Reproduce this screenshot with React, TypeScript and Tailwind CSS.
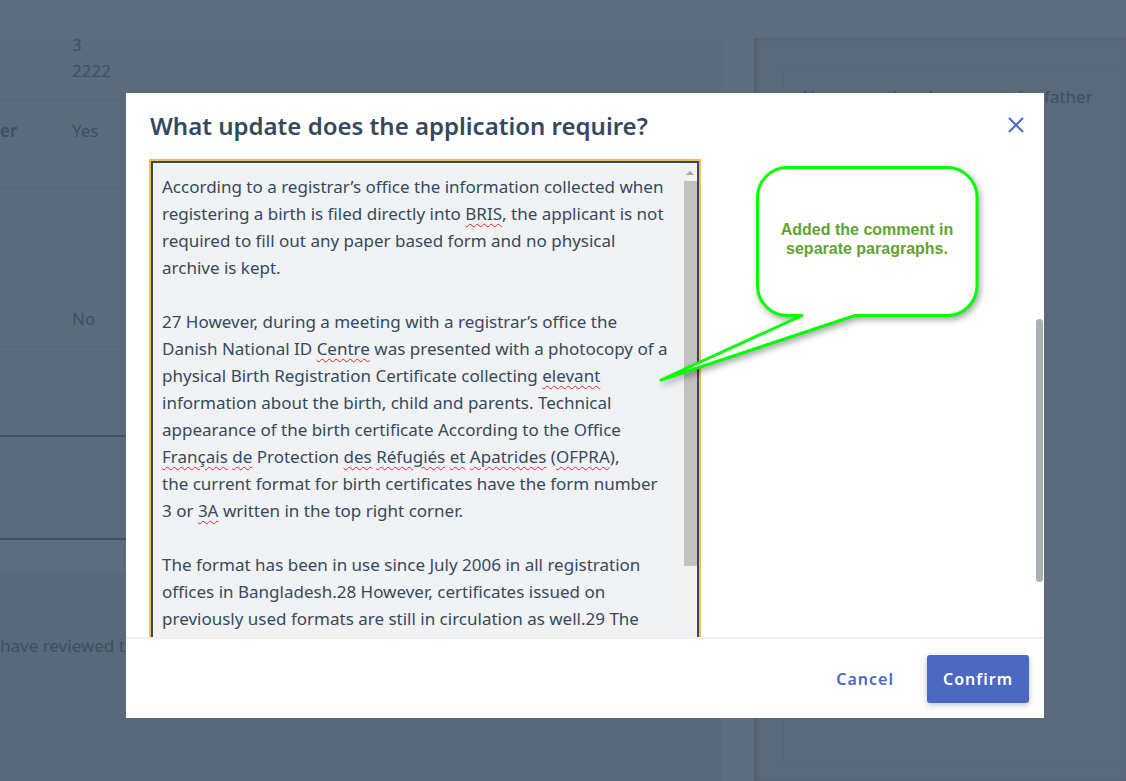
import React from 'react';

const sq = 'underline decoration-wavy decoration-[#e0242b] decoration-1 underline-offset-[3px]';

function Squiggle({ children }: { children: React.ReactNode }) {
  return <span className={sq}>{children}</span>;
}

// lines as shown in the textarea (wrapped the same way as the screenshot)
const lines: React.ReactNode[] = [
  'According to a registrar’s office the information collected when',
  <>registering a birth is filed directly into <Squiggle>BRIS</Squiggle>, the applicant is not</>,
  'required to fill out any paper based form and no physical',
  'archive is kept.',
  '',
  '27 However, during a meeting with a registrar’s office the',
  <>Danish National ID <Squiggle>Centre</Squiggle> was presented with a photocopy of a</>,
  <>physical Birth Registration Certificate collecting <Squiggle>elevant</Squiggle></>,
  'information about the birth, child and parents. Technical',
  'appearance of the birth certificate According to the Office',
  <>
    <Squiggle>Français</Squiggle> <Squiggle>de</Squiggle> Protection <Squiggle>des</Squiggle>{' '}
    <Squiggle>Réfugiés</Squiggle> <Squiggle>et</Squiggle> <Squiggle>Apatrides</Squiggle> (<Squiggle>OFPRA</Squiggle>),
  </>,
  'the current format for birth certificates have the form number',
  <>3 or <Squiggle>3A</Squiggle> written in the top right corner.</>,
  '',
  'The format has been in use since July 2006 in all registration',
  'offices in Bangladesh.28 However, certificates issued on',
  'previously used formats are still in circulation as well.29 The',
  'certificate is issued by the registrar and is signed and stamped',
];

function Background() {
  return (
    <div className="absolute inset-0 flex flex-col bg-[#5b6a7b] text-[#3d5064]">
      <div className="h-[38px] shrink-0 bg-[#5e6d7e] shadow-[0_1px_2px_rgba(40,50,60,0.35)]" />
      <div className="flex flex-1">
        {/* left content */}
        <div className="w-[722px] shrink-0 flex flex-col">
          <div className="bg-[#5c6b7c] flex flex-col">
            <div className="h-[63px] border-b border-[#56667a] pl-[72px] text-[17px] leading-[26px]">
              <div className="-mt-[6px]">3</div>
              <div>2222</div>
            </div>
            <div className="h-[87px] border-b border-[#56667a] flex items-start pt-[17px] text-[17px]">
              <span className="w-[72px] font-semibold">er</span>
              <span>Yes</span>
            </div>
            <div className="h-[159px] border-b border-[#56667a] pl-[72px] pt-[118px] text-[17px]">No</div>
            <div className="h-[90px] border-b-2 border-[#3f5063]" />
            <div className="h-[103px] border-b-2 border-[#3f5063]" />
            <div className="h-[33px] bg-[#5e6d7e]" />
          </div>
          <div className="flex-1 bg-[#5a697a] pt-[60px] text-[17px] whitespace-nowrap">
            have reviewed the
          </div>
        </div>
        {/* spacer column */}
        <div className="w-[32px] shrink-0 bg-[#5e6d7e]" />
        {/* right panel */}
        <div className="flex-1 bg-[#5b6a7b] shadow-[inset_3px_0_4px_rgba(40,50,60,0.2)] pl-[29px] pt-[28px]">
          <div className="h-[700px] border border-[#56667a] pl-[18px] pt-[17px] text-[17px] whitespace-nowrap">
            No supporting documents for father
          </div>
        </div>
      </div>
    </div>
  );
}

function Callout() {
  return (
    <>
      <svg
        className="absolute left-0 top-0 pointer-events-none drop-shadow-[2px_3px_3px_rgba(0,0,0,0.35)]"
        width={918}
        height={625}
        viewBox="0 0 918 625"
      >
        <path
          d="M661.5 74.5 H821 A30 30 0 0 1 851 104.5 V192.5 A30 30 0 0 1 821 222.5 H729 L535 287 L676 222.5 H661.5 A30 30 0 0 1 631.5 192.5 V104.5 A30 30 0 0 1 661.5 74.5 Z"
          fill="#ffffff"
          stroke="#00ff00"
          strokeWidth={3}
          strokeLinejoin="round"
        />
      </svg>
      <div className="absolute left-[631px] top-[127px] w-[220px] text-center font-['Liberation_Sans',Arial,sans-serif] font-bold text-[16px] leading-[19px] text-[#62a330]">
        Added the comment in
        <br />
        separate paragraphs.
      </div>
    </>
  );
}

export default function App() {
  return (
    <div className="relative w-[1126px] h-[781px] overflow-hidden font-['Noto_Sans',sans-serif]">
      <Background />

      {/* modal */}
      <div className="absolute left-[126px] top-[93px] w-[918px] h-[625px] bg-white flex flex-col">
        <div className="h-[66px] shrink-0 flex items-center justify-between pl-6 pr-[20px]">
          <h2 className="text-[24px] font-semibold text-[#35495d]">
            What update does the application require?
          </h2>
          <button className="w-[16px] h-[16px] -mt-[2px]">
            <svg width={16} height={16} viewBox="0 0 16 16">
              <path d="M1 1 L15 15 M15 1 L1 15" stroke="#4c68c1" strokeWidth={2} fill="none" />
            </svg>
          </button>
        </div>

        <div className="relative flex-1 overflow-hidden pl-[23px]">
          <div className="w-[552px] h-[600px] border-2 border-[#efc052]">
            <div className="relative h-full border-2 border-[#35495e] bg-[#f1f2f4] pl-[9px] pt-[10px] text-[17px] leading-[27px] text-[#35495d]">
              {lines.map((l, i) => (
                <div key={i} className="h-[27px] whitespace-nowrap">
                  {l}
                </div>
              ))}
              {/* textarea scrollbar */}
              <div className="absolute right-0 top-0 w-[14px] h-full bg-[#f1f1f1] flex flex-col items-center">
                <div className="mt-[8px] w-0 h-0 border-l-[4px] border-r-[4px] border-b-[4px] border-l-transparent border-r-transparent border-b-[#a3a3a3]" />
                <div className="mt-[6px] w-[13px] h-[385px] bg-[#c1c1c1]" />
              </div>
            </div>
          </div>
        </div>

        <Callout />

        {/* modal scrollbar */}
        <div className="absolute left-[910px] top-[226px] w-[7px] h-[263px] rounded-full bg-[#a9b1b5]" />

        <div className="h-[81px] shrink-0 border-t-2 border-[#f0f0f0] flex items-center justify-end pr-[15px] gap-[17px]">
          <button className="h-[48px] px-4 text-[16px] font-semibold tracking-[1px] text-[#4c68c1]">Cancel</button>
          <button className="h-[48px] w-[102px] rounded-[3px] bg-[#4c68c1] text-white text-[16px] font-semibold tracking-[1px] shadow-[0_2px_6px_rgba(0,0,0,0.25)]">
            Confirm
          </button>
        </div>
      </div>
    </div>
  );
}
